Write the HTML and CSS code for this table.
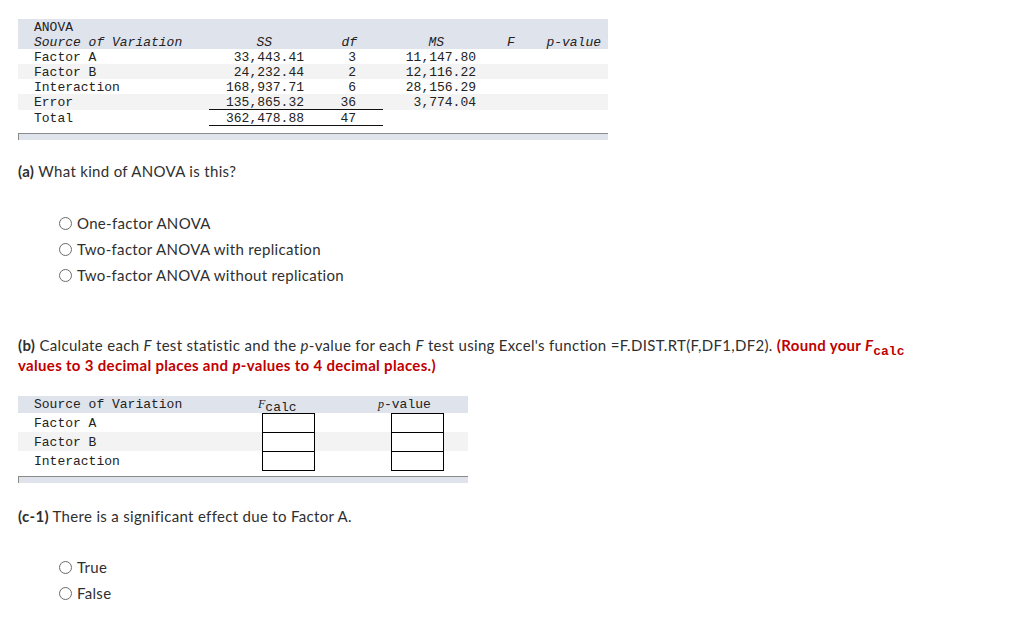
FILE: index.html
```html
<!DOCTYPE html>
<html>
<head>
<meta charset="utf-8">
<link rel="stylesheet" href="styles.css">
</head>
<body>
<div class="page">
  <div class="anova">
    <table class="anova-table">
      <colgroup>
        <col class="c-src"><col class="c-ss"><col class="c-df"><col class="c-ms"><col class="c-f"><col class="c-p">
      </colgroup>
      <thead>
        <tr><th class="src">ANOVA</th><th></th><th></th><th></th><th></th><th></th></tr>
        <tr class="labels">
          <th class="src"><i>Source of Variation</i></th>
          <th class="ss-h"><i>SS</i></th>
          <th class="df-h"><i>df</i></th>
          <th class="ms-h"><i>MS</i></th>
          <th class="f-h"><i>F</i></th>
          <th class="p-h"><i>p-value</i></th>
        </tr>
      </thead>
      <tbody>
        <tr><td class="src">Factor A</td><td class="num ss">33,443.41</td><td class="num df">3</td><td class="num ms">11,147.80</td><td></td><td></td></tr>
        <tr class="alt"><td class="src">Factor B</td><td class="num ss">24,232.44</td><td class="num df">2</td><td class="num ms">12,116.22</td><td></td><td></td></tr>
        <tr><td class="src">Interaction</td><td class="num ss">168,937.71</td><td class="num df">6</td><td class="num ms">28,156.29</td><td></td><td></td></tr>
        <tr class="alt rule"><td class="src">Error</td><td class="num ss">135,865.32</td><td class="num df">36</td><td class="num ms">3,774.04</td><td></td><td></td></tr>
        <tr class="rule total"><td class="src">Total</td><td class="num ss">362,478.88</td><td class="num df">47</td><td></td><td></td><td></td></tr>
      </tbody>
    </table>
    <div class="tfoot-bar"></div>
  </div>

  <p class="q q-a"><b>(a)</b> What kind of ANOVA is this?</p>
  <ul class="opts opts-a">
    <li><span class="radio"></span>One-factor ANOVA</li>
    <li><span class="radio"></span>Two-factor ANOVA with replication</li>
    <li><span class="radio"></span>Two-factor ANOVA without replication</li>
  </ul>

  <p class="q q-b"><b>(b)</b> Calculate each <i>F</i> test statistic and the <i>p</i>-value for each <i>F</i> test using Excel's function =F.DIST.RT(F,DF1,DF2). <span class="red">(Round your <i>F</i><sub class="mono">calc</sub> values to 3 decimal places and <i>p</i>-values to 4 decimal places.)</span></p>

  <div class="answer">
    <table class="answer-table">
      <colgroup><col class="a-src"><col class="a-f"><col class="a-p"></colgroup>
      <thead>
        <tr>
          <th class="src">Source of Variation</th>
          <th class="fc-h"><i>F</i><sub>calc</sub></th>
          <th class="pv-h"><i>p</i>-value</th>
        </tr>
      </thead>
      <tbody>
        <tr><td class="src">Factor A</td><td class="f-cell"><span class="box"></span></td><td class="p-cell"><span class="box"></span></td></tr>
        <tr class="alt"><td class="src">Factor B</td><td class="f-cell"><span class="box"></span></td><td class="p-cell"><span class="box"></span></td></tr>
        <tr><td class="src">Interaction</td><td class="f-cell"><span class="box"></span></td><td class="p-cell"><span class="box"></span></td></tr>
      </tbody>
    </table>
    <div class="tfoot-bar"></div>
  </div>

  <p class="q q-c"><b>(c-1)</b> There is a significant effect due to Factor A.</p>
  <ul class="opts opts-c">
    <li><span class="radio"></span>True</li>
    <li><span class="radio"></span>False</li>
  </ul>
</div>
</body>
</html>
```

FILE: styles.css
```css
html, body {
  margin: 0;
  padding: 0;
  background: #fff;
}

.page {
  padding: 19px 0 0 18px;
  font-family: Lato, "Liberation Sans", sans-serif;
  font-size: 15px;
  letter-spacing: 0.32px;
  color: #2f2f2f;
  width: 930px;
}

/* ---------- ANOVA table ---------- */
.anova {
  width: 590px;
}

.anova-table,
.answer-table {
  border-collapse: collapse;
  table-layout: fixed;
  font-family: "Liberation Mono", "Courier New", monospace;
  font-size: 13px;
  letter-spacing: 0;
  color: #222;
}

.anova-table {
  width: 590px;
}

.c-src { width: 191px; }
.c-ss { width: 105px; }
.c-df { width: 69px; }
.c-ms { width: 103px; }
.c-f { width: 50px; }
.c-p { width: 72px; }

.anova-table th,
.anova-table td {
  padding: 0;
  font-weight: normal;
  white-space: nowrap;
}

.anova-table th {
  height: 13px;
  line-height: 13px;
  padding-top: 2px;
}

.anova-table td {
  height: 12px;
  line-height: 12px;
  padding-top: 3px;
}

.anova-table thead {
  background: #dfe3ec;
}

.anova-table .src {
  text-align: left;
  padding-left: 16px;
}

.anova-table .ss-h { text-align: right; padding-right: 42px; }
.anova-table .df-h { text-align: right; padding-right: 26px; }
.anova-table .ms-h { text-align: right; padding-right: 42px; }
.anova-table .f-h { text-align: center; }
.anova-table .p-h { text-align: right; padding-right: 7px; }

.anova-table .num { text-align: right; }
.anova-table .ss { padding-right: 10px; }
.anova-table .df { padding-right: 27px; }
.anova-table .ms { padding-right: 10px; }

.anova-table tr.alt td {
  background: #f3f3f3;
}

.anova-table tr.rule td.ss,
.anova-table tr.rule td.df {
  border-bottom: 1px solid #111;
}

.tfoot-bar {
  margin-top: 7px;
  height: 6px;
  background: #dfe3ec;
  border-top: 1px solid #8a8a8a;
  border-left: 1px solid #8a8a8a;
}

/* ---------- questions ---------- */
.q {
  margin: 0;
  line-height: 20px;
}

.q b {
  font-weight: bold;
}

.q-a { margin-top: 21px; }
.q-b { margin-top: 47px; }
.q-c { margin-top: 23px; }

.red {
  color: #c00000;
  font-weight: bold;
}

.red sub.mono {
  font-family: "Liberation Mono", "Courier New", monospace;
  font-style: normal;
  font-size: 13px;
  letter-spacing: 0;
  vertical-align: -4px;
  line-height: 0;
}

.opts {
  list-style: none;
  margin: 0;
  padding: 0 0 0 41px;
}

.opts-a { margin-top: 29px; }
.opts-c { margin-top: 28px; }

.opts li {
  display: flex;
  align-items: center;
  height: 26px;
  line-height: 20px;
}

.radio {
  box-sizing: border-box;
  width: 13px;
  height: 13px;
  border: 1px solid #6a6a6a;
  border-radius: 50%;
  margin-right: 5px;
  flex: none;
  background: #fff;
}

/* ---------- answer table ---------- */
.answer {
  width: 450px;
  margin-top: 21px;
}

.answer-table {
  width: 450px;
}

.a-src { width: 236px; }
.a-f { width: 120px; }
.a-p { width: 94px; }

.answer-table thead {
  background: #dfe3ec;
}

.answer-table th {
  height: 17px;
  line-height: 17px;
  padding: 0;
  font-weight: normal;
  text-align: left;
  white-space: nowrap;
}

.answer-table .src {
  padding-left: 16px;
  text-align: left;
}

.answer-table .fc-h {
  padding-left: 4px;
}

.answer-table .pv-h {
  padding-left: 4px;
}

.answer-table .fc-h i,
.answer-table .pv-h i {
  font-family: "Liberation Serif", serif;
  font-size: 12px;
}

.answer-table .fc-h sub {
  font-size: 13px;
  vertical-align: -3px;
  line-height: 0;
}

.answer-table td {
  height: 19px;
  padding: 0;
  vertical-align: top;
  line-height: 19px;
}

.answer-table td.src {
  height: 16px;
  padding-top: 3px;
  line-height: 16px;
}

.answer-table td.f-cell {
  padding-left: 8px;
}

.answer-table td.p-cell {
  padding-left: 17px;
}

.answer-table tr.alt td {
  background: #f3f3f3;
}

.box {
  display: block;
  box-sizing: border-box;
  width: 53px;
  height: 20px;
  border: 1px solid #000;
  background: #fff;
  margin-bottom: -1px;
}

.answer .tfoot-bar {
  margin-top: 6px;
}
```
